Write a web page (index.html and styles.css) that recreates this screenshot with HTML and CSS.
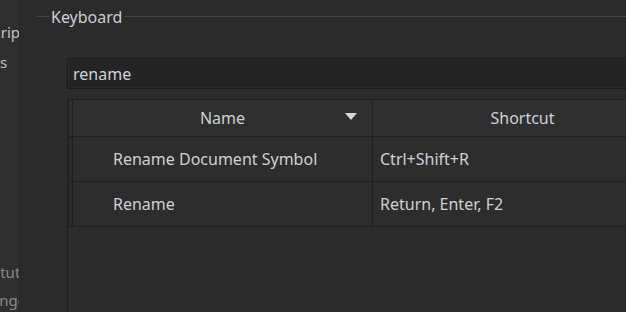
FILE: index.html
```html
<!DOCTYPE html>
<html>
<head>
<meta charset="utf-8">
<link rel="stylesheet" href="styles.css">
</head>
<body>
<div class="app">
  <aside class="sidebar">
    <div class="side-top">
      <div class="side-item s1"><span class="clip-a">Descripti</span></div>
      <div class="side-item s2"><span class="clip-b">Settings</span></div>
    </div>
    <div class="side-bottom">
      <div class="side-item dim s3"><span class="clip-c">Substitute</span></div>
      <div class="side-item dim s4"><span class="clip-d">Changes</span></div>
    </div>
  </aside>
  <main class="main">
    <div class="group-title">
      <span class="line short"></span>
      <span class="title">Keyboard</span>
      <span class="line long"></span>
    </div>
    <div class="group-body">
      <div class="search">rename</div>
      <div class="table">
        <div class="row head">
          <div class="cell rh"></div>
          <div class="cell name hc">Name<span class="sort"></span></div>
          <div class="cell shortcut hc">Shortcut</div>
        </div>
        <div class="row">
          <div class="cell rh"></div>
          <div class="cell name">Rename Document Symbol</div>
          <div class="cell shortcut">Ctrl+Shift+R</div>
        </div>
        <div class="row">
          <div class="cell rh"></div>
          <div class="cell name">Rename</div>
          <div class="cell shortcut">Return, Enter, F2</div>
        </div>
      </div>
    </div>
  </main>
</div>
</body>
</html>
```
FILE: styles.css
```css
html, body {
  margin: 0;
  padding: 0;
  background: #2b2b2b;
  overflow: hidden;
}
body {
  font-family: "Noto Sans", "Open Sans", sans-serif;
  font-size: 16px;
  color: #cdd1d6;
}
.app {
  display: flex;
  width: 626px;
  height: 312px;
  overflow: hidden;
}
.sidebar {
  width: 19px;
  flex: none;
  background: #2f2f2f;
  border-right: 1px solid #272727;
  overflow: hidden;
  display: flex;
  flex-direction: column;
  justify-content: space-between;
  color: #c4c4c4;
  font-size: 15px;
}
.side-item {
  white-space: nowrap;
  line-height: 22px;
  height: 22px;
}
.side-top { padding-top: 21px; }
.s2 { margin-top: 8px; }
.side-bottom { padding-bottom: 1px; }
.s4 { margin-top: 6px; }
.dim { color: #8a8a8a; }
.clip-a { margin-left: -33px; }
.clip-b { margin-left: -50px; }
.clip-c { margin-left: -43px; }
.clip-d { margin-left: -28px; }
.main {
  flex: 1;
  min-width: 0;
  padding: 6px 0 0 17px;
  display: flex;
  flex-direction: column;
}
.group-title {
  display: flex;
  align-items: center;
  height: 22px;
  line-height: 22px;
}
.line {
  height: 1px;
  background: #464646;
  margin-top: -1px;
}
.line.short { width: 12px; flex: none; }
.line.long { flex: 1; }
.title {
  padding: 0 3px 0 2px;
  color: #cbd0d6;
}
.group-body {
  padding-left: 30px;
  padding-top: 30px;
  display: flex;
  flex-direction: column;
  flex: 1;
  min-height: 0;
}
.search {
  height: 29px;
  line-height: 30px;
  border: 1px solid #1b1b1b;
  box-shadow: inset 0 0 0 1px #2a2a2a;
  background: #242424;
  padding: 0 0 0 5px;
  margin-right: -2px;
  color: #cfd3d8;
}
.table {
  margin-top: 10px;
  flex: 1;
  border-left: 1px solid #1e1e1e;
  border-top: 1px solid #1e1e1e;
  background: #2c2c2c;
  overflow: hidden;
}
.row {
  display: flex;
  height: 45px;
}
.row.head {
  height: 37px;
  background: #2f2f2f;
}
.cell {
  flex: none;
  box-sizing: border-box;
  border-right: 1px solid #1f1f1f;
  border-bottom: 1px solid #1f1f1f;
  display: flex;
  align-items: center;
  white-space: nowrap;
}
.rh {
  width: 5px;
  background: #2a2a2a;
  border-left: 1px solid #252525;
}
.head .rh { background: #2e2e2e; }
.name {
  width: 300px;
  padding-left: 40px;
  background: #2d2d2d;
}
.shortcut {
  width: 300px;
  padding-left: 7px;
  background: #2d2d2d;
}
.head .name, .head .shortcut { background: #2f2f2f; }
.hc {
  justify-content: center;
  padding-left: 0;
  position: relative;
}
.sort {
  position: absolute;
  left: 272px;
  top: 13px;
  width: 0;
  height: 0;
  border-left: 6.5px solid transparent;
  border-right: 6.5px solid transparent;
  border-top: 7px solid #d6d6d6;
}
```
